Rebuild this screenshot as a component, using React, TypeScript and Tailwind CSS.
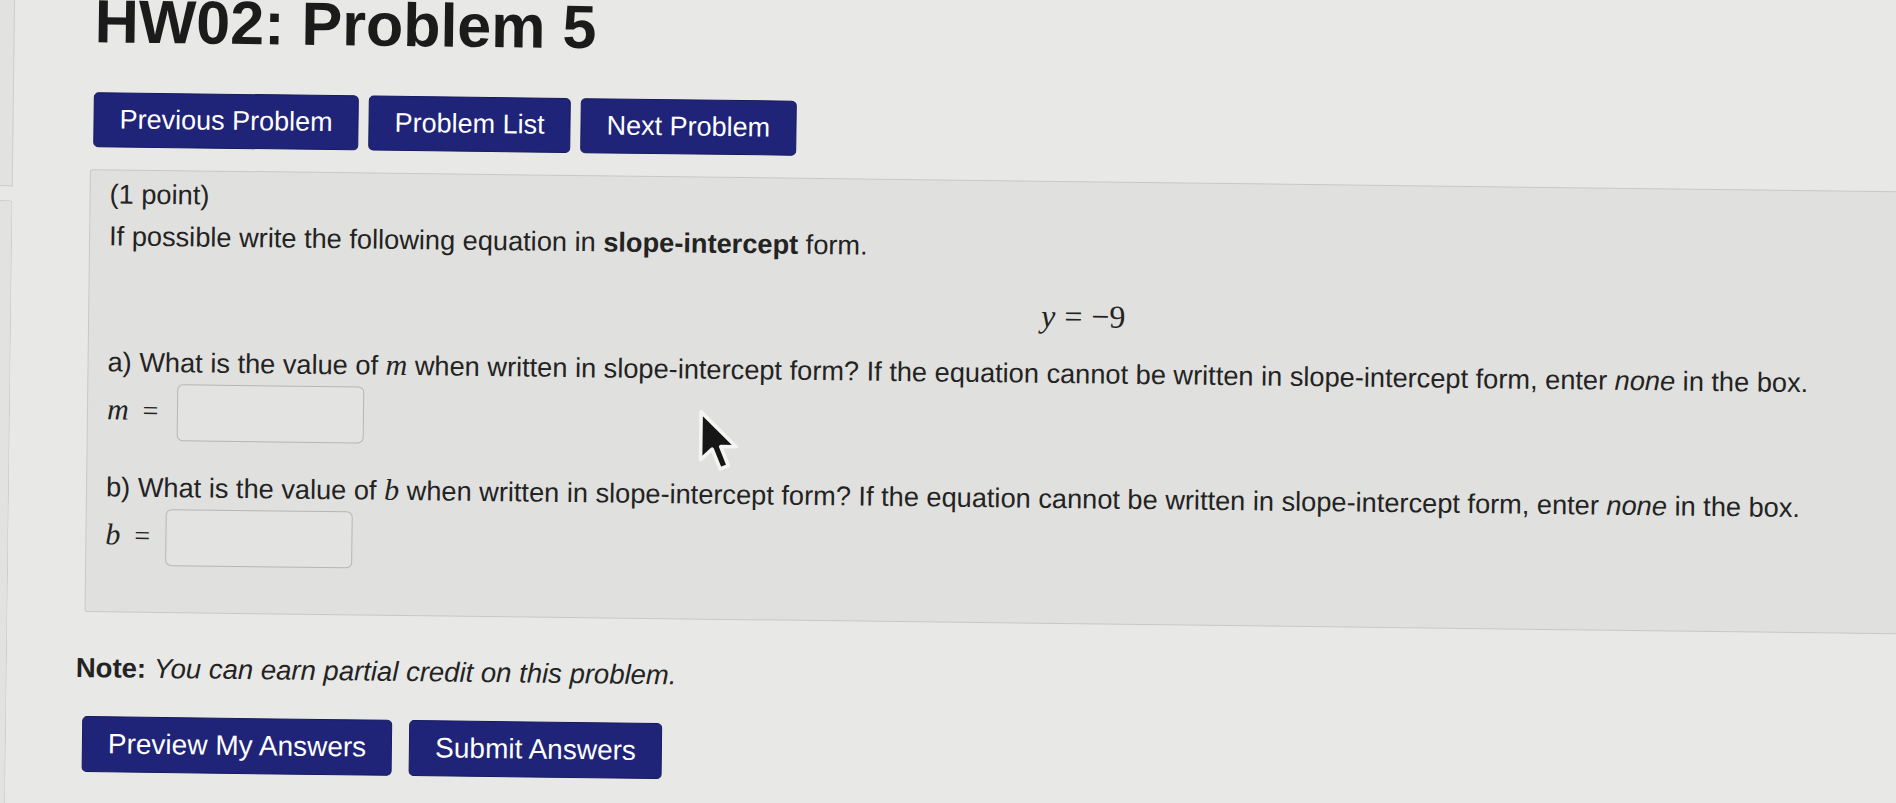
// WeBWorK problem page (photo of screen)

function NavButton({ label, size = 'top' }: { label: string; size?: 'top' | 'bottom' }) {
  return (
    <button
      type="button"
      className={
        size === 'top'
          ? 'flex h-[55px] items-center justify-center rounded-[5px] border border-[#161a5e] bg-[#1f2479] px-[25px] text-[27px] leading-none text-white'
          : 'flex h-[56px] items-center justify-center rounded-[5px] border border-[#161a5e] bg-[#1f2479] px-[25px] text-[28px] leading-none text-white'
      }
    >
      {label}
    </button>
  );
}

function AnswerRow({ variable, boxGap }: { variable: string; boxGap: string }) {
  return (
    <div className="flex items-center">
      <span className="flex items-baseline pb-[6px] font-['Liberation_Serif',serif] leading-none">
        <i className="text-[30px]">{variable}</i>
        <span className="ml-[14px] text-[28px]">=</span>
      </span>
      <input
        type="text"
        readOnly
        className={`${boxGap} h-[57px] w-[187px] rounded-[6px] border border-[#b6b6b4] bg-[#e3e3e1] outline-none`}
      />
    </div>
  );
}

export default function App() {
  return (
    <div className="h-[803px] w-full overflow-hidden bg-[#e8e8e6] font-['Liberation_Sans',Arial,sans-serif] text-[#232323]">
      <div className="relative flex w-[2000px] origin-top-left rotate-[0.7deg]">
        {/* left sidebar edge */}
        <aside className="flex w-[15px] shrink-0 flex-col gap-[14px]">
          <div className="h-[186px] border-r border-b border-[#cdcdcb] bg-[#e2e2e0]" />
          <div className="h-[700px] rounded-tr-[4px] border-t border-r border-[#cdcdcb] bg-[#e2e2e0]" />
        </aside>

        <main className="flex flex-col pl-[77px]">
          {/* Title */}
          <h1 className="-mt-[10px] ml-[3px] text-[61px] font-bold leading-[61px] text-[#1b1b1b]">
            HW02: Problem 5
          </h1>

          {/* Problem navigation */}
          <div className="mt-[40px] ml-[3px] flex gap-[10px]">
            <NavButton label="Previous Problem" />
            <NavButton label="Problem List" />
            <NavButton label="Next Problem" />
          </div>

          {/* Problem body */}
          <div className="mt-[22px] w-[1990px] rounded-[3px] border border-[#c8c8c6] bg-[#e0e0de] px-[19px] pt-[3px] pb-[46px] text-[27.2px] leading-[42px]">
            <p>(1 point)</p>
            <p>
              If possible write the following equation in <b>slope-intercept</b> form.
            </p>

            <div className="pt-[26px] pb-[16px] text-center font-['Liberation_Serif',serif] text-[32px] leading-[42px]">
              <i>y</i>
              <span className="mx-[9px]">=</span>
              <span>−9</span>
            </div>

            <p>
              a) What is the value of{' '}
              <i className="font-['Liberation_Serif',serif] text-[30px] leading-none">m</i> when written in
              slope-intercept form? If the equation cannot be written in slope-intercept form, enter{' '}
              <i>none</i> in the box.
            </p>
            <AnswerRow variable="m" boxGap="ml-[19px]" />

            <p className="mt-[26px]">
              b) What is the value of{' '}
              <i className="font-['Liberation_Serif',serif] text-[30px] leading-none">b</i> when written in
              slope-intercept form? If the equation cannot be written in slope-intercept form, enter{' '}
              <i>none</i> in the box.
            </p>
            <AnswerRow variable="b" boxGap="ml-[15px]" />
          </div>

          {/* Note */}
          <p className="mt-[35px] -ml-[8px] text-[27.5px] leading-[42px]">
            <b>Note:</b> <i>You can earn partial credit on this problem.</i>
          </p>

          {/* Submit buttons */}
          <div className="mt-[27px] -ml-[1px] flex gap-[17px]">
            <NavButton label="Preview My Answers" size="bottom" />
            <NavButton label="Submit Answers" size="bottom" />
          </div>
        </main>

        {/* mouse pointer */}
        <svg
          className="absolute top-[400px] left-[702px]"
          width="43"
          height="64"
          viewBox="0 0 12.6 19.5"
        >
          <path
            d="M1 1 L1 15.6 L4.5 12.3 L7 18.3 L9.5 17.3 L7.1 11.5 L11.8 11.5 Z"
            fill="#161616"
            stroke="#f4f4f4"
            strokeWidth="1.1"
            strokeLinejoin="round"
          />
        </svg>
      </div>
    </div>
  );
}
